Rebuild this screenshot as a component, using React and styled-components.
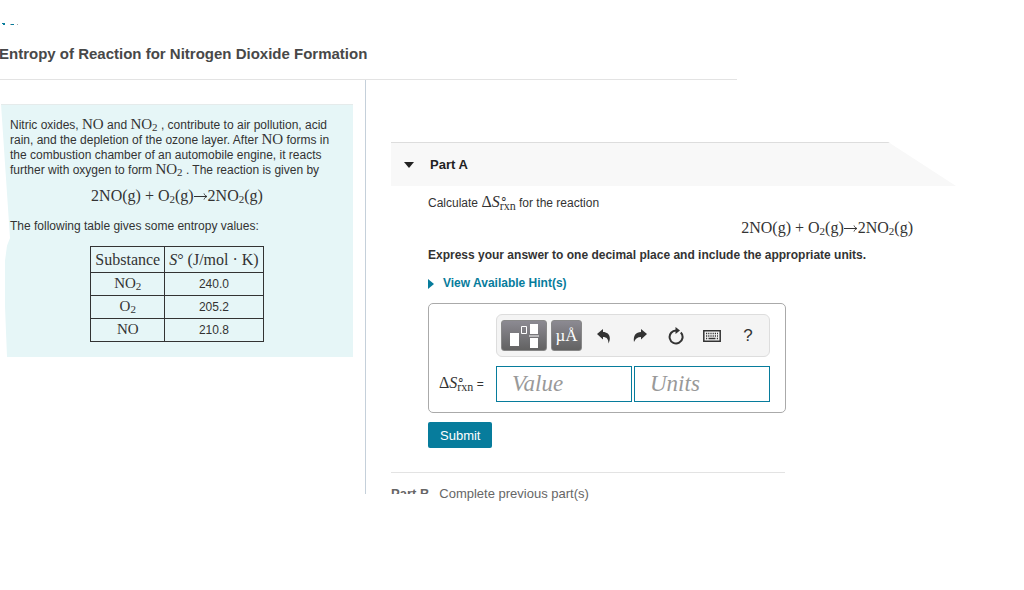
import styled, { createGlobalStyle } from "styled-components";

const rows = [
  { name: "NO", sub: "2", value: "240.0" },
  { name: "O", sub: "2", value: "205.2" },
  { name: "NO", sub: "", value: "210.8" },
];

const Equation = () => (
  <Formula $size={16}>
    2NO(g) + O<Sub>2</Sub>(g)
    <LongArrow viewBox="0 0 14 10" aria-hidden="true">
      <path d="M0 5.5H13M10 2.5C10.600 4 11.500 5 13 5.500C11.500 6 10.600 7 10 8.500" />
    </LongArrow>
    2NO<Sub>2</Sub>(g)
  </Formula>
);

const DeltaS = () => (
  <Formula $size={16}>
    Δ<i>S</i>
    <Scripts>
      <span>∘</span>
      <span>rxn</span>
    </Scripts>
  </Formula>
);

const Problem = () => (
  <ProblemBox>
    <p>
      Nitric oxides, <Formula>NO</Formula> and <Formula>NO<Sub>2</Sub></Formula> , contribute to air pollution, acid
      rain, and the depletion of the ozone layer. After <Formula>NO</Formula> forms in
      the combustion chamber of an automobile engine, it reacts
      further with oxygen to form <Formula>NO<Sub>2</Sub></Formula> . The reaction is given by
    </p>
    <Centered><Equation /></Centered>
    <p>The following table gives some entropy values:</p>
    <EntropyTable>
      <thead>
        <tr>
          <th>Substance</th>
          <th><i>S</i>° (J/mol · K)</th>
        </tr>
      </thead>
      <tbody>
        {rows.map((row) => (
          <tr key={row.name + row.sub}>
            <td><Formula>{row.name}<Sub>{row.sub}</Sub></Formula></td>
            <td>{row.value}</td>
          </tr>
        ))}
      </tbody>
    </EntropyTable>
  </ProblemBox>
);

const Toolbar = () => (
  <ToolbarBar>
    <DarkButton $width={46} aria-label="Templates">
      <svg width="30" height="26" viewBox="0 0 30 26" aria-hidden="true">
        <path fill="#fff" d="M1 10h9v13H1zM21 1h8v10h-8zM21 15h8v10h-8zM20 12.500h10v1H20z" />
        <path fill="none" stroke="#fff" d="M12.500 3.500h5v7h-5z" />
      </svg>
    </DarkButton>
    <DarkButton $width={31}>µÅ</DarkButton>
    <ToolButton aria-label="Undo">
      <svg width="14" height="16" viewBox="0 0 14 16" aria-hidden="true">
        <path fill="#333" d="M0 6L6 1V4C11 4 15 8 11.500 15.500C11.500 11 9.500 9 6 9V11.500Z" />
      </svg>
    </ToolButton>
    <ToolButton aria-label="Redo">
      <svg width="14" height="16" viewBox="0 0 14 16" aria-hidden="true">
        <path fill="#333" d="M14 6L8 1V4C3 4 0 7.500 1 14C2.500 10.500 4.500 9 8 9V11.500Z" />
      </svg>
    </ToolButton>
    <ToolButton aria-label="Reset">
      <svg width="16" height="18" viewBox="0 0 16 18" aria-hidden="true">
        <path fill="none" stroke="#333" strokeWidth="2" d="M12.800 5.500A6.500 6.500 0 1 1 8.500 3.500" />
        <path fill="#333" d="M7.500 0L12 3.500L7.500 7Z" />
      </svg>
    </ToolButton>
    <ToolButton aria-label="Keyboard">
      <svg width="18" height="12" viewBox="0 0 18 12" aria-hidden="true">
        <path fill="none" stroke="#333" strokeWidth="1.500" d="M.8.800h16.400v10.400H.8z" />
        <path stroke="#333" strokeWidth="1.500" strokeDasharray="1.200 1" d="M3 3.500h12M3 6h12" />
        <path stroke="#333" strokeWidth="1.500" d="M3 8.500h1.200M5.500 8.500h7M13.800 8.500h1.200" />
      </svg>
    </ToolButton>
    <ToolButton aria-label="Help">?</ToolButton>
  </ToolbarBar>
);

const App = () => (
  <Page>
    <GlobalStyle />
    <TitleBar>
      <Crumbs width="20" height="3" viewBox="0 0 20 3" aria-hidden="true">
        <path fill="#077c9c" d="M2 0h3v2H3V1H2zM11 1h3v1h-3z" />
        <path fill="#aaa" d="M10 1h1v1h-1zM17 1h1v1h-1z" />
      </Crumbs>
      <Title>Entropy of Reaction for Nitrogen Dioxide Formation</Title>
    </TitleBar>
    <Columns>
      <Left><Problem /></Left>
      <Right>
        <PartHeader>
          <svg width="10" height="6" viewBox="0 0 10 6" aria-hidden="true">
            <path fill="#222" d="M0 0h10L5 6z" />
          </svg>
          <h2>Part A</h2>
        </PartHeader>
        <PartBody>
          <p>Calculate <DeltaS /> for the reaction</p>
          <ReactionLine><Equation /></ReactionLine>
          <Instruction>Express your answer to one decimal place and include the appropriate units.</Instruction>
          <HintLink href="#hints">
            <svg width="6" height="10" viewBox="0 0 6 10" aria-hidden="true">
              <path fill="#077c9c" d="M0 0l6 5l-6 5z" />
            </svg>
            View Available Hint(s)
          </HintLink>
          <AnswerBox>
            <Toolbar />
            <FieldLabel htmlFor="value"><DeltaS /> =</FieldLabel>
            <Fields>
              <AnswerInput id="value" placeholder="Value" />
              <AnswerInput aria-label="Units" placeholder="Units" />
            </Fields>
          </AnswerBox>
          <Submit>Submit</Submit>
        </PartBody>
        <NextPart>
          <CutText><b>Part B</b></CutText>
          <span>Complete previous part(s)</span>
        </NextPart>
      </Right>
    </Columns>
  </Page>
);

const GlobalStyle = createGlobalStyle`
* {
  box-sizing: border-box;
}
body {
  margin: 0;
  background: #fff;
  color: #333;
  font: 12px/15px "Liberation Sans", Arial, sans-serif;
}
h1, h2, p {
  margin: 0;
}
button, input {
  font-family: inherit;
}
`;
const Page = styled.main`
overflow: hidden;
`;
const TitleBar = styled.header`
width: 72%;
height: 80px;
padding-top: 23px;
border-bottom: 1px solid #e3e3e3;
`;
const Crumbs = styled.svg`
display: block;
`;
const Title = styled.h1`
margin: 18px 0 0 -1px;
color: #484848;
font-size: 15px;
line-height: 20px;
white-space: nowrap;
`;
const Columns = styled.div`
display: flex;
align-items: flex-start;
`;
const Left = styled.section`
width: 366px;
flex-shrink: 0;
height: 414px;
padding: 24px 12px 0 1px;
border-right: 1px solid #c5d0da;
`;
const ProblemBox = styled.div`
padding: 13px 9px 15px;
border-top: 1px solid #e5ebeb;
background: #e6f6f7;
clip-path: polygon(0 0, 100% 0, 100% 100%, 6px 100%, 4px 80%, 4px 62%, 6px 56%, 9px 53%);
`;
const Formula = styled.span`
font-family: "Liberation Serif", "Times New Roman", serif;
font-size: ${(props) => props.$size || 15}px;
line-height: 0;
white-space: nowrap;
`;
const Sub = styled.span`
font-size: 11px;
line-height: 0;
vertical-align: -2px;
`;
const Scripts = styled.span`
display: inline-flex;
flex-direction: column;
font-size: 12px;
line-height: 7px;
vertical-align: middle;
`;
const LongArrow = styled.svg`
width: 14px;
height: 10px;
fill: none;
stroke: #333;
`;
const Centered = styled.div`
padding: 12px 0 14px;
text-align: center;
`;
const EntropyTable = styled.table`
margin: 12px auto 0;
border-collapse: collapse;
text-align: center;
th, td {
  height: 23px;
  padding: 0 4px;
  border: 1px solid #333;
}
th {
  height: 26px;
  font: 16px/15px "Liberation Serif", "Times New Roman", serif;
}
`;
const Right = styled.section`
flex: 1;
padding: 62px 68px 0 25px;
`;
const PartHeader = styled.div`
display: flex;
align-items: center;
gap: 16px;
height: 44px;
padding-left: 13px;
border-top: 1px solid #ddd;
background: #f8f8f8;
clip-path: polygon(0 0, 88% 0, 100% 100%, 0 100%);
h2 {
  color: #222;
  font-size: 13px;
}
`;
const PartBody = styled.div`
display: flex;
flex-direction: column;
align-items: flex-start;
padding: 10px 0 24px 37px;
`;
const ReactionLine = styled.div`
align-self: flex-end;
padding: 11px 43px 11px 0;
`;
const Instruction = styled.p`
font-weight: bold;
white-space: nowrap;
`;
const HintLink = styled.a`
display: flex;
align-items: center;
gap: 9px;
margin-top: 13px;
color: #077c9c;
font-weight: bold;
text-decoration: none;
`;
const AnswerBox = styled.div`
display: grid;
grid-template-columns: 48px auto;
align-items: center;
gap: 9px;
margin-top: 12px;
padding: 10px 15px 10px 10px;
border: 1px solid #aaa;
border-radius: 5px;
`;
const FieldLabel = styled.label`
white-space: nowrap;
`;
const ToolbarBar = styled.div`
grid-column: 2;
display: flex;
align-items: center;
height: 43px;
padding-left: 4px;
border: 1px solid #ddd;
border-radius: 6px;
background: #f4f4f4;
`;
const DarkButton = styled.button`
display: flex;
align-items: center;
justify-content: center;
flex-shrink: 0;
width: ${(props) => props.$width}px;
height: 31px;
margin-right: 4px;
padding: 0;
border: 1px solid #888;
border-radius: 3px;
background: linear-gradient(#8c8a92, #626262);
color: #fff;
font: 17px "Liberation Serif", serif;
`;
const ToolButton = styled.button`
display: flex;
align-items: center;
justify-content: center;
flex-shrink: 0;
width: 36px;
height: 30px;
padding: 0;
border: 0;
background: none;
color: #333;
font-size: 17px;
`;
const Fields = styled.div`
display: flex;
gap: 2px;
`;
const AnswerInput = styled.input`
width: 136px;
height: 36px;
padding: 0 15px;
border: 1px solid #077c9c;
background: #fff;
font: italic 23px "Liberation Serif", "Times New Roman", serif;
&::placeholder {
  color: #999;
}
`;
const Submit = styled.button`
height: 26px;
margin-top: 9px;
padding: 0 12px;
border: 0;
border-radius: 2px;
background: #077c9c;
color: #fff;
font-size: 13px;
`;
const NextPart = styled.div`
display: flex;
gap: 10px;
width: 394px;
padding-top: 13px;
border-top: 1px solid #e3e3e3;
color: #666;
font-size: 13px;
`;
const CutText = styled.span`
height: 8px;
overflow: hidden;
`;
export default App;
